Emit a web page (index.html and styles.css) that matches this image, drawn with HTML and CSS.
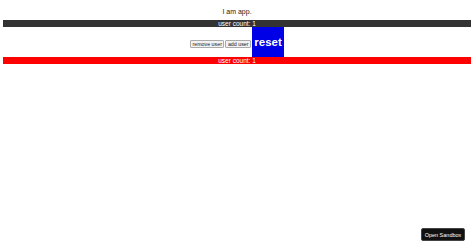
FILE: index.html
```html
<!DOCTYPE html>
<html lang="en">
<head>
    <meta charset="UTF-8">
    <meta name="viewport" content="width=device-width, initial-scale=1.0">
    <title>App</title>
    <link rel="stylesheet" href="styles.css">
</head>
<body>
    <div class="app">
        <p class="title">I am app.</p>
        <div class="count dark">user count: 1</div>
        <div class="controls">
            <button class="small">remove user</button><button class="small">add user</button><button class="reset">reset</button>
        </div>
        <div class="count red">user count: 1</div>
    </div>
    <button class="sandbox">Open Sandbox</button>
</body>
</html>
```

FILE: styles.css
```css
* {
    box-sizing: border-box;
    margin: 0;
    padding: 0;
}

body {
    font-family: "Liberation Sans", Arial, sans-serif;
    background: white;
    margin: 3px;
    height: 242px;
    position: relative;
}

.app {
    text-align: center;
}

.title {
    font-size: 7px;
    line-height: 17px;
    color: #222;
}

.count {
    font-size: 6.5px;
    line-height: 7px;
    height: 7px;
    color: white;
}

.dark {
    background: #333;
}

.red {
    background: #ff0000;
}

.controls {
    height: 30px;
    display: flex;
    justify-content: center;
    align-items: center;
}

.small {
    font-family: inherit;
    font-size: 5.3px;
    height: 8px;
    padding: 0 1.5px;
    background: #f2f2f2;
    border: 1px solid #aaa;
    border-radius: 1px;
    color: #222;
    margin-top: 3px;
}

.small + .small {
    margin-left: 1px;
}

.reset {
    font-family: inherit;
    width: 32px;
    height: 30px;
    margin-left: 1px;
    background: #0000e6;
    color: white;
    border: none;
    font-size: 11.5px;
    font-weight: bold;
}

.sandbox {
    position: absolute;
    right: 6px;
    top: 225px;
    width: 44px;
    height: 13px;
    background: #111;
    color: white;
    border: 1px solid #444;
    border-radius: 2px;
    font-family: inherit;
    font-size: 5.5px;
}
```
